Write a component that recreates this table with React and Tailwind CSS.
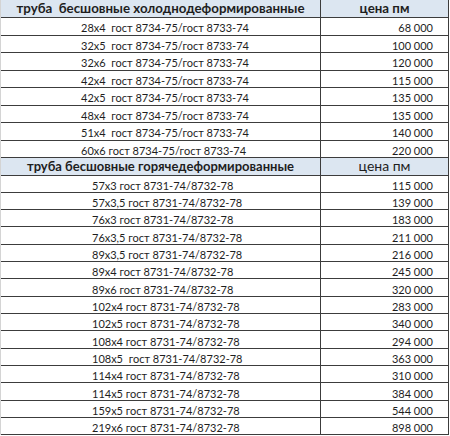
import React from 'react';

const cold = [
  ['28x4  гост 8734-75/гост 8733-74', '68 000'],
  ['32x5  гост 8734-75/гост 8733-74', '100 000'],
  ['32x6  гост 8734-75/гост 8733-74', '120 000'],
  ['42x4  гост 8734-75/гост 8733-74', '115 000'],
  ['42x5  гост 8734-75/гост 8733-74', '135 000'],
  ['48x4  гост 8734-75/гост 8733-74', '135 000'],
  ['51x4  гост 8734-75/гост 8733-74', '140 000'],
  ['60x6 гост 8734-75/гост 8733-74', '220 000'],
];

const hot = [
  ['57x3 гост 8731-74/8732-78', '115 000'],
  ['57x3,5 гост 8731-74/8732-78', '139 000'],
  ['76x3 гост 8731-74/8732-78', '183 000'],
  ['76x3,5 гост 8731-74/8732-78', '211 000'],
  ['89x3,5 гост 8731-74/8732-78', '216 000'],
  ['89x4 гост 8731-74/8732-78', '245 000'],
  ['89x6 гост 8731-74/8732-78', '320 000'],
  ['102x4 гост 8731-74/8732-78', '283 000'],
  ['102x5 гост 8731-74/8732-78', '340 000'],
  ['108x4 гост 8731-74/8732-78', '294 000'],
  ['108x5  гост 8731-74/8732-78', '363 000'],
  ['114x4 гост 8731-74/8732-78', '310 000'],
  ['114x5 гост 8731-74/8732-78', '384 000'],
  ['159x5 гост 8731-74/8732-78', '544 000'],
  ['219x6 гост 8731-74/8732-78', '898 000'],
];

function Row({ name, price, h, pl }) {
  return (
    <div className={`flex border-b border-[#3c3c3c] text-[11px] ${h}`}>
      <div className={`w-[320px] shrink-0 border-r border-[#3c3c3c] flex items-center pt-[3px] whitespace-pre ${pl}`}>{name}</div>
      <div className="flex-1 flex items-center justify-end pt-[3px] pr-[15px]">{price}</div>
    </div>
  );
}

export default function App() {
  return (
    <div className="w-[450px] h-[436px] bg-white overflow-hidden">
      <div
        className="w-[449px] border-l border-[#d4d4d4] border-r border-r-[#3c3c3c] text-[#1e1e1e] leading-none"
        style={{ fontFamily: 'Lato, "Open Sans", sans-serif' }}
      >
        <div className="flex h-[18px] bg-[#dce6f1] border-b border-[#3c3c3c] font-bold text-[13.3px]">
          <div className="w-[320px] shrink-0 border-r border-[#3c3c3c] flex items-center justify-center whitespace-pre">труба  бесшовные холоднодеформированные</div>
          <div className="flex-1 flex items-center justify-center">цена пм</div>
        </div>
        {cold.map(([n, p]) => (
          <Row key={n} name={n} price={p} h="h-[17.5px]" pl="pl-[80px]" />
        ))}
        <div className="flex h-[17.5px] bg-[#dce6f1] border-b border-[#3c3c3c]">
          <div className="w-[320px] shrink-0 border-r border-[#3c3c3c] flex items-center justify-center font-bold text-[13px]">труба бесшовные горячедеформированные</div>
          <div className="flex-1 flex items-center justify-center text-[14px]">цена пм</div>
        </div>
        {hot.map(([n, p]) => (
          <Row key={n} name={n} price={p} h="h-[17.33px]" pl="pl-[91px]" />
        ))}
      </div>
    </div>
  );
}
